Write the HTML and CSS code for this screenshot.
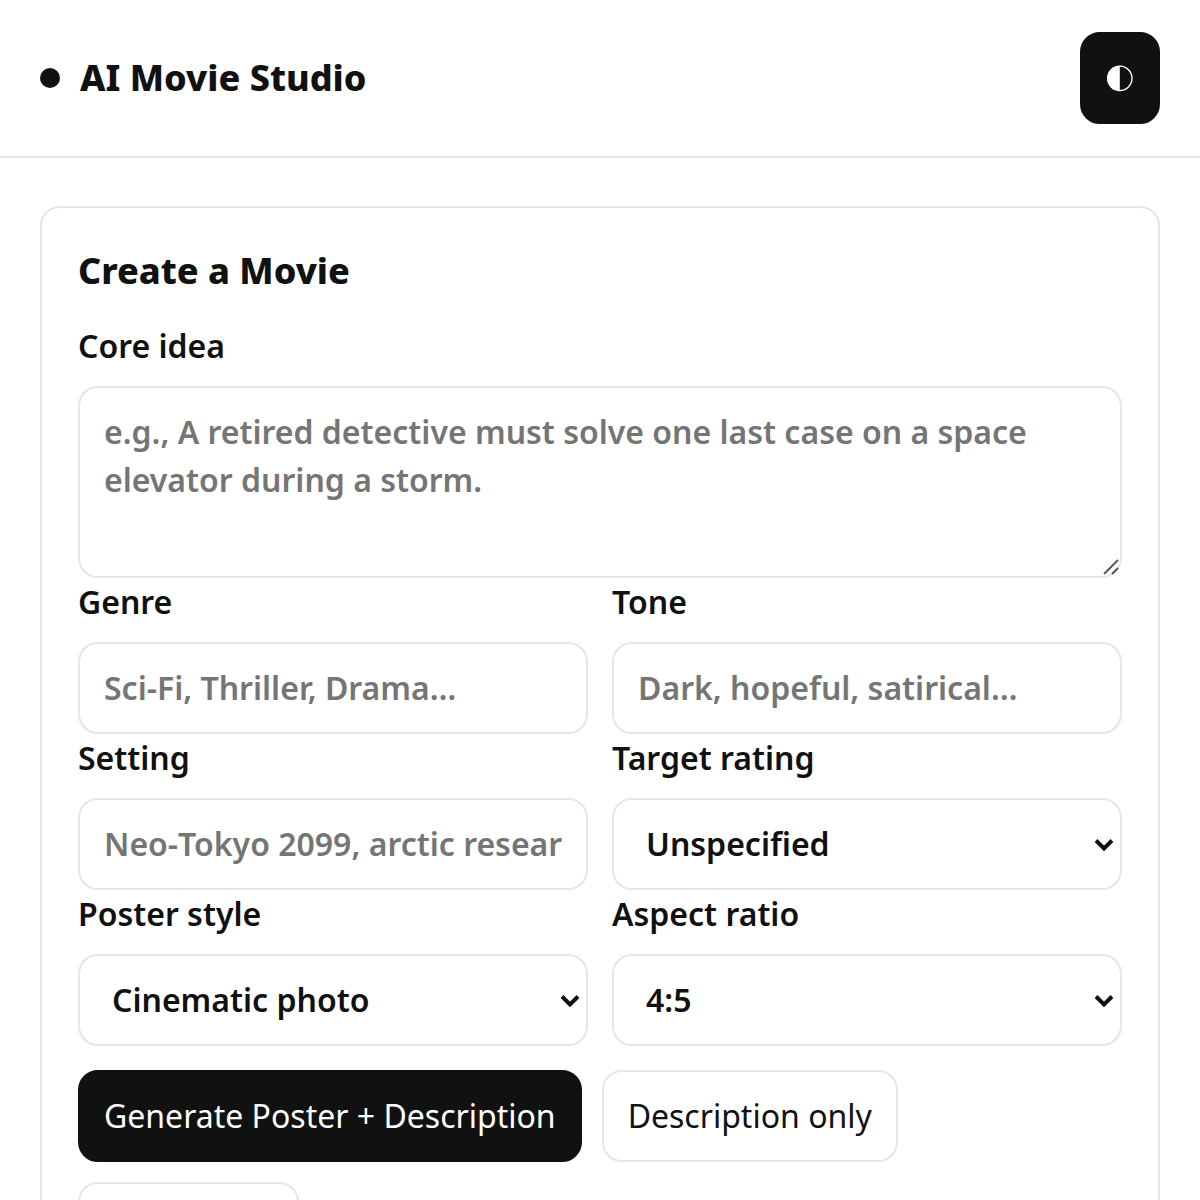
FILE: index.html
```html
<!DOCTYPE html>
<html lang="en">
<head>
    <meta charset="UTF-8">
    <meta name="viewport" content="width=device-width, initial-scale=1.0">
    <title>AI Movie Studio</title>
    <link rel="stylesheet" href="styles.css">
</head>
<body>
    <header class="site-header">
        <div class="brand">
            <span class="dot"></span>
            <span>AI Movie Studio</span>
        </div>
        <button class="btn primary" id="theme-toggle" type="button" aria-label="Toggle theme">
            <svg class="theme-icon" viewBox="0 0 28 28" aria-hidden="true">
                <circle cx="13.8" cy="14.3" r="12.2" fill="none" stroke="currentColor" stroke-width="1.4"/>
                <path d="M13.8 2.1a12.2 12.2 0 0 0 0 24.4z" fill="currentColor"/>
            </svg>
        </button>
    </header>

    <main class="container">
        <section class="card">
            <h2>Create a Movie</h2>
            <form id="movie-form">
                <label for="idea">Core idea</label>
                <div class="field">
                    <textarea id="idea" placeholder="e.g., A retired detective must solve one last case on a space elevator during a storm."></textarea>
                    <svg class="grip" viewBox="0 0 18 18" aria-hidden="true">
                        <path d="M2 16L16 2M10 16l6-6" fill="none" stroke="currentColor" stroke-width="1.8"/>
                    </svg>
                </div>

                <div class="row">
                    <div>
                        <label for="genre">Genre</label>
                        <input id="genre" type="text" placeholder="Sci&#8209;Fi, Thriller, Drama…">
                    </div>
                    <div>
                        <label for="tone">Tone</label>
                        <input id="tone" type="text" placeholder="Dark, hopeful, satirical…">
                    </div>
                </div>

                <div class="row">
                    <div>
                        <label for="setting">Setting</label>
                        <input id="setting" type="text" placeholder="Neo&#8209;Tokyo 2099, arctic research base…">
                    </div>
                    <div>
                        <label for="rating">Target rating</label>
                        <div class="field">
                            <select id="rating">
                                <option>Unspecified</option>
                            </select>
                            <svg class="chevron" viewBox="0 0 20 14" aria-hidden="true">
                                <path d="M2 2.5l8 8 8-8" fill="none" stroke="currentColor" stroke-width="4"/>
                            </svg>
                        </div>
                    </div>
                </div>

                <div class="row">
                    <div>
                        <label for="style">Poster style</label>
                        <div class="field">
                            <select id="style">
                                <option>Cinematic photo</option>
                            </select>
                            <svg class="chevron" viewBox="0 0 20 14" aria-hidden="true">
                                <path d="M2 2.5l8 8 8-8" fill="none" stroke="currentColor" stroke-width="4"/>
                            </svg>
                        </div>
                    </div>
                    <div>
                        <label for="ratio">Aspect ratio</label>
                        <div class="field">
                            <select id="ratio">
                                <option>4:5</option>
                            </select>
                            <svg class="chevron" viewBox="0 0 20 14" aria-hidden="true">
                                <path d="M2 2.5l8 8 8-8" fill="none" stroke="currentColor" stroke-width="4"/>
                            </svg>
                        </div>
                    </div>
                </div>

                <div class="actions">
                    <button class="btn primary" type="button">Generate Poster + Description</button>
                    <button class="btn" type="button">Description only</button>
                    <button class="btn" type="button">Poster only</button>
                </div>
            </form>
        </section>
    </main>
</body>
</html>
```

FILE: styles.css
```css
* {
    box-sizing: border-box;
}

body {
    margin: 0;
    font-family: "Noto Sans", sans-serif;
    font-size: 32px;
    line-height: 48px;
    color: #111;
    background: #fff;
}

.site-header {
    display: flex;
    justify-content: space-between;
    align-items: center;
    padding: 32px 40px;
    border-bottom: 2px solid #e6e6e6;
}

.brand {
    display: flex;
    align-items: center;
    gap: 20px;
    font-size: 36px;
    line-height: 54px;
    font-weight: 800;
}

.dot {
    width: 20px;
    height: 20px;
    border-radius: 50%;
    background: #111;
}

.container {
    padding: 48px 40px;
}

.card {
    padding: 36px;
    border: 2px solid #e6e6e6;
    border-radius: 20px;
}

h2 {
    margin: 0 0 24px;
    font-size: 36px;
    line-height: 54px;
    font-weight: 800;
}

label {
    display: block;
    margin-bottom: 16px;
    font-weight: 600;
}

input,
textarea,
select {
    display: block;
    width: 100%;
    padding: 20px 24px;
    border: 2px solid #e6e6e6;
    border-radius: 20px;
    font: inherit;
    font-weight: 600;
    color: #111;
    background: #fff;
}

select {
    padding: 20px 32px;
    appearance: none;
}

textarea {
    min-height: 192px;
    resize: vertical;
}

textarea::-webkit-resizer {
    background: transparent;
}

.field {
    position: relative;
}

.chevron {
    position: absolute;
    top: 40px;
    right: 8px;
    width: 20px;
    height: 14px;
    pointer-events: none;
}

.grip {
    position: absolute;
    right: 2px;
    bottom: 2px;
    width: 18px;
    height: 18px;
    color: #555;
    pointer-events: none;
}

.row {
    display: grid;
    grid-template-columns: 1fr 1fr;
    gap: 24px;
}

.actions {
    display: flex;
    flex-wrap: wrap;
    gap: 20px;
    margin-top: 24px;
}

.btn {
    padding: 20px 24px;
    border: 2px solid #e6e6e6;
    border-radius: 20px;
    font: inherit;
    color: #111;
    background: #fff;
    cursor: pointer;
}

.btn.primary {
    border-color: #111;
    color: #fff;
    background: #111;
}

.theme-icon {
    display: block;
    width: 28px;
    height: 48px;
}
```
